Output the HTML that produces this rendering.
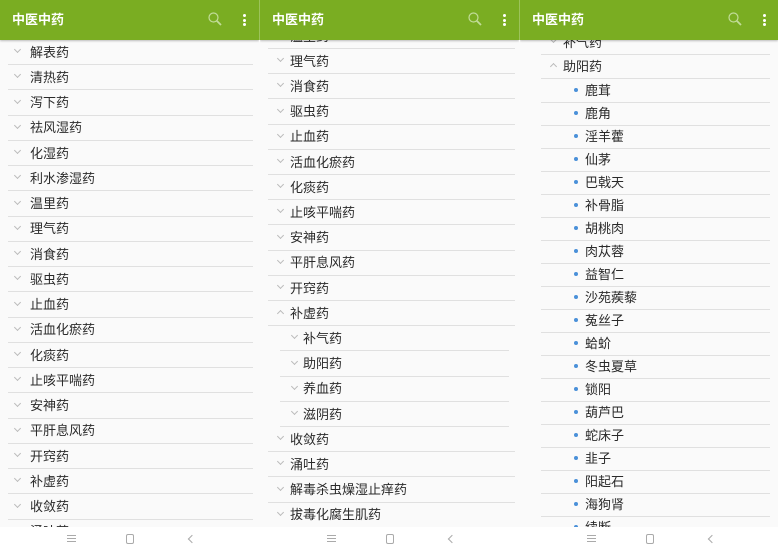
<!DOCTYPE html>
<html><head><meta charset="utf-8"><style>
*{margin:0;padding:0;box-sizing:border-box}
body{width:778px;height:550px;overflow:hidden;background:#fafafa;font-family:"Liberation Sans","Noto Sans CJK SC",sans-serif;position:relative}
.p{position:absolute;top:0;width:259px;height:527px;overflow:hidden;background:#fafafa}
.hd{position:absolute;left:0;top:0;width:100%;height:40px;background:#7aad22;z-index:5;box-shadow:0 1px 2px rgba(0,0,0,.25)}
.hd .t{position:absolute;left:12px;top:12px;color:#fff;font-size:13px;font-weight:bold;line-height:16px}
.hd svg{position:absolute;top:11px}
.hd .dots{position:absolute;top:14px;width:3px}
.hd .dots i{display:block;width:3px;height:3px;background:#fff;border-radius:50%;margin-bottom:1.5px}
.r{position:absolute;font-size:13px;line-height:18px;color:#2a2a2a;white-space:nowrap}
.c{position:absolute;width:5px;height:5px;border-left:1px solid #bbb;border-bottom:1px solid #bbb;transform:rotate(-45deg)}
.u{position:absolute;width:5px;height:5px;border-right:1px solid #bbb;border-top:1px solid #bbb;transform:rotate(-45deg)}
.d{position:absolute;height:1px;background:#e0e0e0}
.dot{position:absolute;width:4px;height:4px;background:#4a90d9;border-radius:50%}
.nav{position:absolute;top:527px;left:0;width:778px;height:23px;background:#fff}
.nav .m{position:absolute;top:8px;width:9px;height:7px;border-top:1px solid #aaa;border-bottom:1px solid #aaa}
.nav .m:after{content:"";position:absolute;left:0;top:2px;width:9px;height:1px;background:#aaa}
.nav .s{position:absolute;top:7px;width:8px;height:10px;border:1px solid #aaa;border-radius:2px}
.nav .b{position:absolute;top:9px;width:6px;height:6px;border-left:1px solid #aaa;border-bottom:1px solid #aaa;transform:rotate(45deg)}
.vl{position:absolute;top:0;width:1px;height:40px;background:#9cc35a;z-index:6}
</style></head><body>

<div class="p" style="left:0">
<div class="hd"><div class="t">中医中药</div>
<svg style="left:207px" width="16" height="16" viewBox="0 0 16 16"><circle cx="6.5" cy="6.5" r="4.5" fill="none" stroke="#c2dc98" stroke-width="1.2"/><line x1="10" y1="10" x2="14" y2="14" stroke="#c2dc98" stroke-width="1.8"/></svg>
<div class="dots" style="left:243px"><i></i><i></i><i></i></div></div>
<div id="p1"></div>
</div>

<div class="p" style="left:260px">
<div class="hd"><div class="t">中医中药</div>
<svg style="left:207px" width="16" height="16" viewBox="0 0 16 16"><circle cx="6.5" cy="6.5" r="4.5" fill="none" stroke="#c2dc98" stroke-width="1.2"/><line x1="10" y1="10" x2="14" y2="14" stroke="#c2dc98" stroke-width="1.8"/></svg>
<div class="dots" style="left:243px"><i></i><i></i><i></i></div></div>
<div id="p2"></div>
</div>

<div class="p" style="left:520px;width:258px">
<div class="hd"><div class="t">中医中药</div>
<svg style="left:207px" width="16" height="16" viewBox="0 0 16 16"><circle cx="6.5" cy="6.5" r="4.5" fill="none" stroke="#c2dc98" stroke-width="1.2"/><line x1="10" y1="10" x2="14" y2="14" stroke="#c2dc98" stroke-width="1.8"/></svg>
<div class="dots" style="left:243px"><i></i><i></i><i></i></div></div>
<div id="p3"></div>
</div>
<div class="vl" style="left:259px"></div><div class="vl" style="left:519px"></div>

<div class="nav">
<div class="m" style="left:67px"></div><div class="s" style="left:126px"></div><div class="b" style="left:189px"></div>
<div class="m" style="left:327px"></div><div class="s" style="left:386px"></div><div class="b" style="left:449px"></div>
<div class="m" style="left:587px"></div><div class="s" style="left:646px"></div><div class="b" style="left:709px"></div>
</div>

<script>
function row(id,cy,txt,type,tx,cx,dl,dr,hasDiv){
 var h='';
 if(type==='c')h+='<div class="c" style="left:'+cx+'px;top:'+(cy-5)+'px"></div>';
 if(type==='u')h+='<div class="u" style="left:'+cx+'px;top:'+(cy-2)+'px"></div>';
 if(type==='o')h+='<div class="dot" style="left:'+cx+'px;top:'+(cy-2)+'px"></div>';
 h+='<div class="r" style="left:'+tx+'px;top:'+(cy-8.5)+'px">'+txt+'</div>';
 if(hasDiv!==false)h+='<div class="d" style="left:'+dl+'px;width:'+(dr-dl)+'px;top:'+Math.round(cy+12)+'px"></div>';
 document.getElementById(id).insertAdjacentHTML('beforeend',h);
}
var a=['解表药','清热药','泻下药','祛风湿药','化湿药','利水渗湿药','温里药','理气药','消食药','驱虫药','止血药','活血化瘀药','化痰药','止咳平喘药','安神药','平肝息风药','开窍药','补虚药','收敛药','涌吐药'];
a.forEach(function(t,i){row('p1',52+25.25*i,t,'c',30,15,8,253);});
var b=[['温里药',0],['理气药',0],['消食药',0],['驱虫药',0],['止血药',0],['活血化瘀药',0],['化痰药',0],['止咳平喘药',0],['安神药',0],['平肝息风药',0],['开窍药',0],['补虚药',2],['补气药',1],['助阳药',1],['养血药',1],['滋阴药',1],['收敛药',0],['涌吐药',0],['解毒杀虫燥湿止痒药',0],['拔毒化腐生肌药',0]];
b.forEach(function(x,i){var cy=36+25.2*i;
 if(x[1]===1)row('p2',cy,x[0],'c',43,32,20,249);
 else row('p2',cy,x[0],x[1]===2?'u':'c',30,18,8,255);});
row('p3',42,'补气药','c',43,31,21,250);
row('p3',66,'助阳药','u',43,31,21,250);
var c=['鹿茸','鹿角','淫羊藿','仙茅','巴戟天','补骨脂','胡桃肉','肉苁蓉','益智仁','沙苑蒺藜','菟丝子','蛤蚧','冬虫夏草','锁阳','葫芦巴','蛇床子','韭子','阳起石','海狗肾','续断'];
c.forEach(function(t,i){row('p3',90+23*i,t,'o',65,54,21,250);});
</script>
</body></html>
